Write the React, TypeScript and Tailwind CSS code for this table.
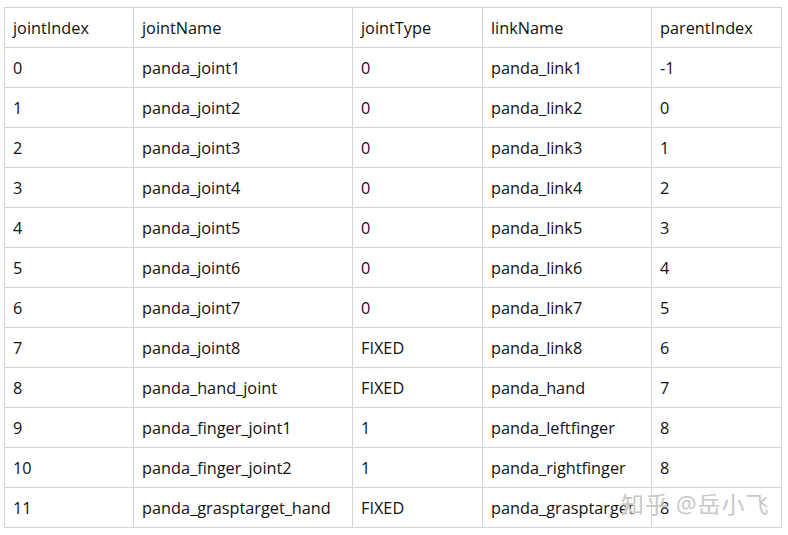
import React from 'react';

const columns = ['jointIndex', 'jointName', 'jointType', 'linkName', 'parentIndex'];
const widths = ['w-[129px]', 'w-[219px]', 'w-[130px]', 'w-[169px]', 'w-[130px]'];

const rows: string[][] = [
  ['0', 'panda_joint1', '0', 'panda_link1', '-1'],
  ['1', 'panda_joint2', '0', 'panda_link2', '0'],
  ['2', 'panda_joint3', '0', 'panda_link3', '1'],
  ['3', 'panda_joint4', '0', 'panda_link4', '2'],
  ['4', 'panda_joint5', '0', 'panda_link5', '3'],
  ['5', 'panda_joint6', '0', 'panda_link6', '4'],
  ['6', 'panda_joint7', '0', 'panda_link7', '5'],
  ['7', 'panda_joint8', 'FIXED', 'panda_link8', '6'],
  ['8', 'panda_hand_joint', 'FIXED', 'panda_hand', '7'],
  ['9', 'panda_finger_joint1', '1', 'panda_leftfinger', '8'],
  ['10', 'panda_finger_joint2', '1', 'panda_rightfinger', '8'],
  ['11', 'panda_grasptarget_hand', 'FIXED', 'panda_grasptarget', '8'],
];

export default function App() {
  return (
    <div className="relative w-[788px] h-[535px] bg-white pl-[4px] pt-[7px] font-['Open_Sans','Noto_Sans_CJK_SC',sans-serif] text-[16.3px] text-[#111]">
      <table className="table-fixed border-collapse">
        <thead>
          <tr className="h-[40px]">
            {columns.map((c, i) => (
              <th key={c} className={`${widths[i]} border border-[#d3d3d3] px-[8px] pt-[2px] text-left font-normal`}>
                {c}
              </th>
            ))}
          </tr>
        </thead>
        <tbody>
          {rows.map((r) => (
            <tr key={r[0]} className="h-[40px]">
              {r.map((cell, i) => (
                <td key={i} className="border border-[#d3d3d3] px-[8px] pt-[2px] whitespace-nowrap overflow-visible">
                  {cell}
                </td>
              ))}
            </tr>
          ))}
        </tbody>
      </table>
      {/* watermark */}
      <div className="absolute left-[621px] top-[487px] text-[23px] text-[#c8c8c8] tracking-[1px] [text-shadow:0_0_2px_#fff,0_0_1px_#fff]">
        知乎 @岳小飞
      </div>
    </div>
  );
}
